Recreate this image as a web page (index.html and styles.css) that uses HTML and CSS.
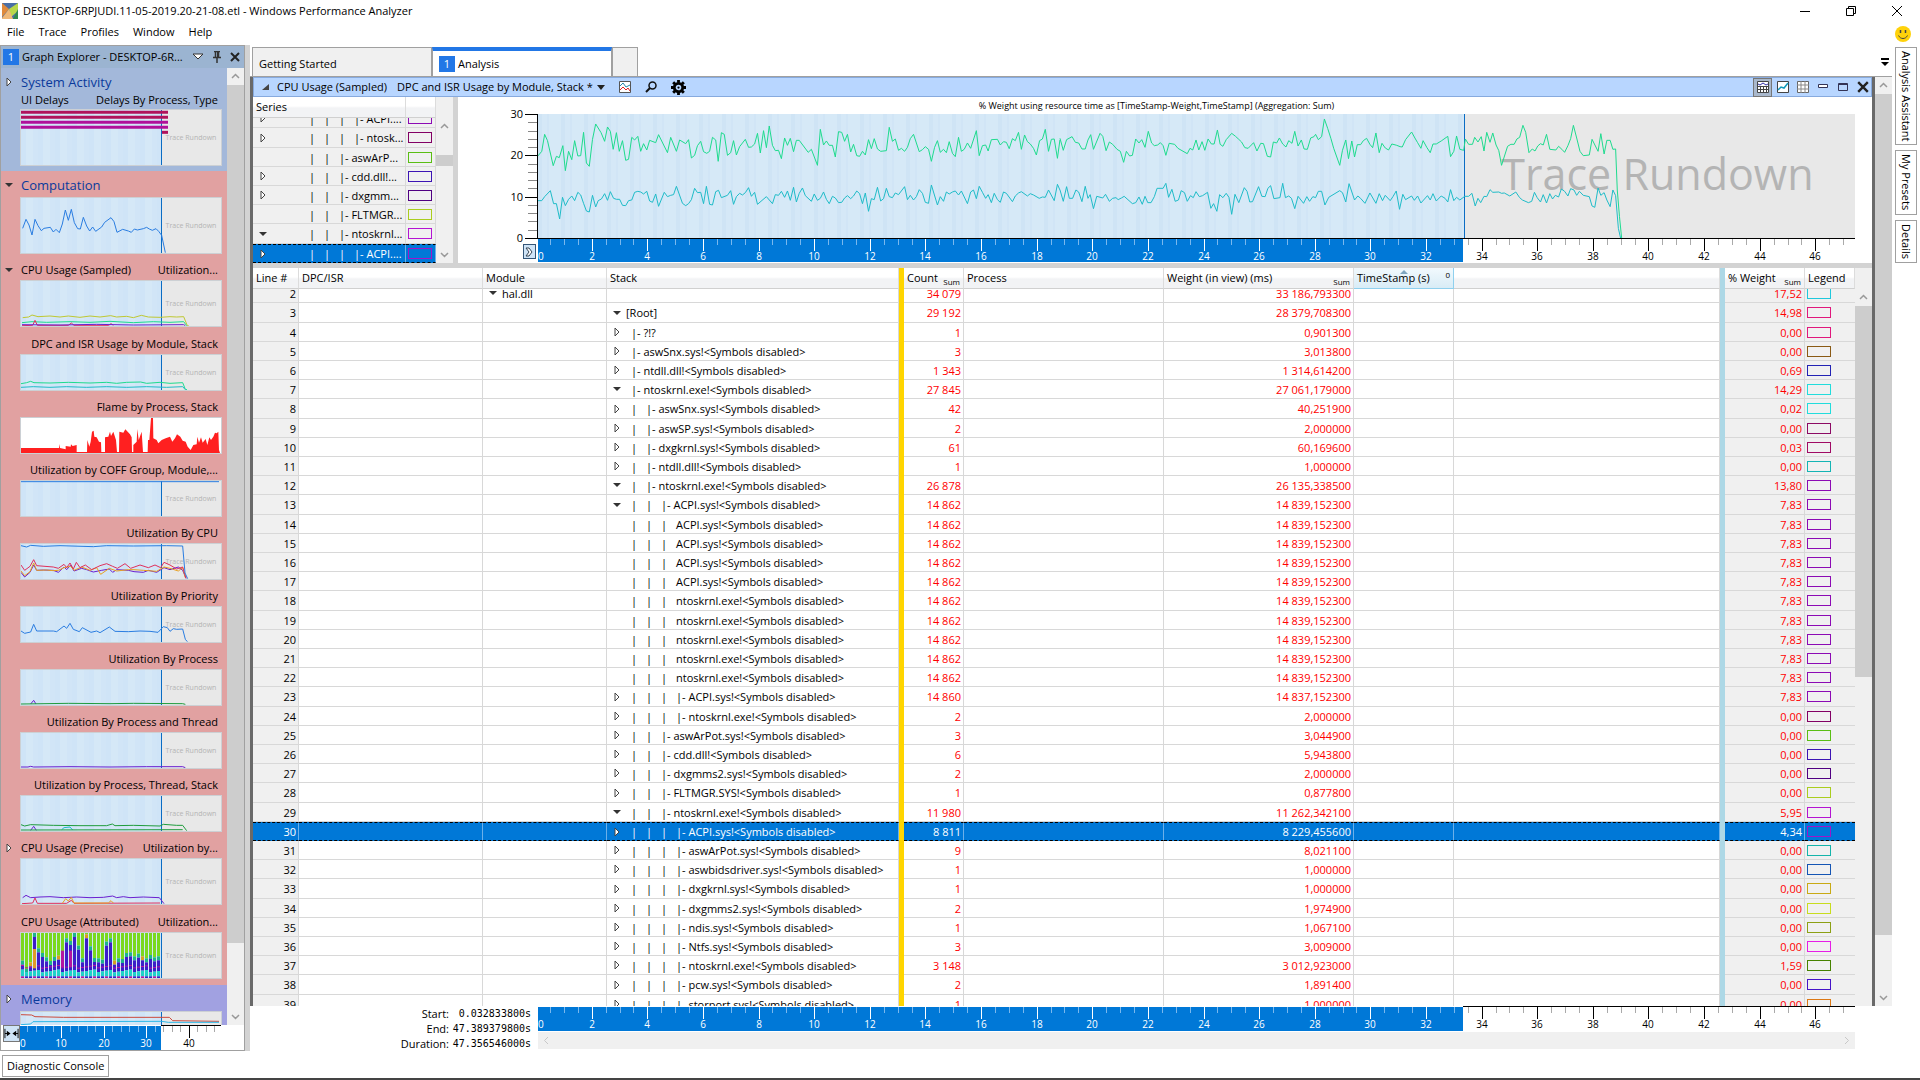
FILE: index.html
```html
<!DOCTYPE html>
<html lang="en">
<head>
<meta charset="UTF-8" />
<title>DESKTOP-6RPJUDI.11-05-2019.20-21-08.etl - Windows Performance Analyzer</title>
<link rel="stylesheet" href="styles.css">
</head>
<body>

<svg class="defs" aria-hidden="true">
  <symbol id="closed" viewBox="0 0 10 10"><path d="M3 1v8l4-4z" fill="#fff" stroke="#444" /></symbol>
  <symbol id="open" viewBox="0 0 10 10"><path d="M1 3h8L5 7z" fill="#333" /></symbol>
  <symbol id="up" viewBox="0 0 9 9"><path d="M1 6l3.500-3.500L8 6" fill="none" stroke="#999" stroke-width="1.500" /></symbol>
  <symbol id="down" viewBox="0 0 9 9"><path d="M1 3l3.500 3.500L8 3" fill="none" stroke="#999" stroke-width="1.500" /></symbol>
  <symbol id="cross" viewBox="0 0 10 10"><path d="M1 1l8 8M9 1L1 9" fill="none" stroke="#222" stroke-width="2" /></symbol>
</svg>

<header class="titlebar">
  <svg class="app-icon" viewBox="0 0 16 16">
    <path d="M0 0h16v16H0z" fill="#4a6fa5" /><path d="M0 0l7 6-7 8z" fill="#e08a3c" /><path d="M7 6l9-6v8l-7 6z" fill="#b9d84a" /><path d="M0 15l7-9 4 10H0z" fill="#f0b878" /><path d="M11 16l5-10v10z" fill="#2f8a4c" />
  </svg>
  <h1>DESKTOP-6RPJUDI.11-05-2019.20-21-08.etl - Windows Performance Analyzer</h1>
  <div class="window-buttons">
    <button aria-label="Minimize"><svg viewBox="0 0 10 10"><path d="M0 5.500h10" stroke="#000" /></svg></button>
    <button aria-label="Restore"><svg viewBox="0 0 10 10"><path d="M.5 2.500h7v7h-7zM2.500 2V.5h7v7H8" fill="none" stroke="#000" /></svg></button>
    <button aria-label="Close"><svg viewBox="0 0 10 10"><path d="M0 0l10 10M10 0L0 10" stroke="#000" /></svg></button>
  </div>
</header>

<nav class="menu">
  <button>File</button><button>Trace</button><button>Profiles</button><button>Window</button><button>Help</button>
</nav>

<div class="workspace">

  <aside class="explorer">
    <div class="explorer-head">
      <span class="badge">1</span>
      <h2>Graph Explorer - DESKTOP-6R...</h2>
      <button aria-label="Options"><svg width="12" height="8" viewBox="0 0 12 8"><path d="M1 1h10L6 6z" fill="#fff" stroke="#333" /></svg></button>
      <button aria-label="Pin"><svg width="10" height="12" viewBox="0 0 10 12"><path d="M2 .5h6M3.500 1v5M6.500 1v5M1 6.500h8M5 7v5" fill="none" stroke="#333" stroke-width="1.500" /><path d="M5 1h2v5H5z" fill="#333" /></svg></button>
      <button aria-label="Close"><svg width="10" height="10"><use href="#cross" /></svg></button>
    </div>
    <div class="explorer-body">
      <div class="graphs">
        <section class="group system">
          <div class="group-title"><svg class="arrow"><use href="#closed" /></svg><h3>System Activity</h3></div>
          <div class="label short"><span>UI Delays</span><span>Delays By Process, Type</span></div>
          <div class="thumb tall"><span class="rundown">Trace Rundown</span>
            <svg viewBox="63 330 600 165" preserveAspectRatio="none">
              <path d="M63 337h441M63 352h441" stroke="#b0125c" stroke-width="9" /><path d="M63 367h441M63 382h441" stroke="#b0109a" stroke-width="9" /><path d="M486 397h18" stroke="#b0125c" stroke-width="9" />
            </svg>
          </div>
        </section>

        <section class="group computation">
          <div class="group-title"><svg class="arrow"><use href="#open" /></svg><h3>Computation</h3></div>
          <div class="thumb tall"><span class="rundown">Trace Rundown</span>
            <svg class="lines" viewBox="63 594 600 165" preserveAspectRatio="none">
              <polyline class="blue" points="68,685 78,658 87,675 96,705 105,658 114,677 124,692 132,685 151,682 160,696 168,688 178,698 187,672 196,630 205,661 214,628 223,668 233,686 241,687 250,652 260,678 269,693 278,681 287,694 305,681 314,667 333,653 342,665 351,697 368,688 385,693 394,697 403,687 412,690 430,686 440,682 448,687 457,691 468,686 476,694 485,706 496,758" />
            </svg>
          </div>

          <div class="label"><svg class="arrow"><use href="#open" /></svg><span class="name">CPU Usage (Sampled)</span><span>Utilization...</span></div>
          <div class="thumb mid"><span class="rundown">Trace Rundown</span>
            <svg class="lines" viewBox="63 96 600 135" preserveAspectRatio="none">
              <polyline class="olive" points="68,206 86,204 96,198 114,203 150,201 180,204 205,201 240,205 270,201 300,204 332,200 350,204 380,202 400,206 424,199 445,204 480,205 510,203 530,204 551,203 562,230 566,230" />
              <polyline class="green" points="66,221 96,218 140,220 210,218 270,220 330,217 400,221 460,218 510,220 551,218 560,230" />
              <polyline class="red" points="66,230 98,229 105,214 112,229 205,229 214,222 222,229 326,229 333,224 340,229" />
              <polyline class="purple" points="66,227 180,228 290,226 400,228 551,227 556,230" />
            </svg>
          </div>

          <div class="label"><span>DPC and ISR Usage by Module, Stack</span></div>
          <div class="thumb"><span class="rundown">Trace Rundown</span>
            <svg class="lines" viewBox="63 315 600 105" preserveAspectRatio="none">
              <polyline class="green" points="63,401 80,398 92,394 102,398 150,399 205,397 270,399 320,397 350,400 380,397 422,396 440,400 480,397 510,400 548,398 556,418 561,419" />
              <polyline class="cyan" points="63,412 100,410 150,412 200,410 260,412 320,410 380,412 440,410 500,412 548,410 556,419" />
            </svg>
          </div>

          <div class="label"><span>Flame by Process, Stack</span></div>
          <div class="thumb flame">
            <svg viewBox="63 504 600 105" preserveAspectRatio="none">
              <polygon fill="#ff2020" points="63,609 63,594 177,594 177,582 180,594 197,598 197,588 212,590 213,583 218,588 230,585 230,606 261,606 262,570 268,590 272,575 276,545 281,542 283,560 290,562 297,575 303,577 304,606 315,606 315,562 325,560 330,545 333,558 340,545 348,570 351,606 357,606 358,545 370,548 376,538 383,545 390,553 395,562 396,606 400,606 400,585 410,575 412,537 416,570 425,545 429,606 443,606 444,570 448,570 453,504 459,504 460,565 470,570 475,580 485,570 497,565 510,560 517,575 525,565 531,553 541,560 548,572 557,575 563,590 572,600 580,585 590,583 592,560 597,578 603,562 608,578 617,567 622,585 628,562 633,570 640,560 645,548 650,550 655,545 657,600 660,609" />
            </svg>
          </div>

          <div class="label"><span>Utilization by COFF Group, Module,...</span></div>
          <div class="thumb"><span class="rundown">Trace Rundown</span>
            <svg class="lines" viewBox="63 693 600 105" preserveAspectRatio="none"><polyline class="blue" points="63,695 657,695" /></svg>
          </div>

          <div class="label"><span>Utilization By CPU</span></div>
          <div class="thumb"><span class="rundown">Trace Rundown</span>
            <svg class="lines" viewBox="63 13 600 105" preserveAspectRatio="none">
              <polyline class="purple" points="63,98 74,112 90,98 101,76 110,92 130,91 160,92 175,98 192,82 200,90 212,76 222,94 245,86 260,90 280,97 305,92 328,88 338,98 350,90 385,92 402,96 430,98 445,92 470,98 492,84 510,90 535,82 548,92 558,116" />
              <polyline class="amber" points="63,94 74,108 90,96 101,70 110,92 140,91 160,93 175,92 192,84 212,80 222,92 245,82 270,92 290,84 302,104 328,86 350,94 385,90 402,90 430,92 470,95 492,82 510,86 535,94 548,84 556,114" />
              <polyline class="red" points="63,76 74,92 90,80 101,60 110,78 160,82 175,86 192,74 200,84 210,70 220,88 229,68 240,84 256,76 275,90 300,78 320,72 338,80 352,86 375,72 392,86 420,76 445,84 465,76 482,84 492,68 510,76 530,88 548,82 558,116" />
              <polyline class="blue" points="63,18 80,22 92,17 130,20 180,18 280,21 320,18 400,19 500,18 548,19 555,100 563,117" />
            </svg>
          </div>

          <div class="label"><span>Utilization By Priority</span></div>
          <div class="thumb"><span class="rundown">Trace Rundown</span>
            <svg class="lines" viewBox="63 202 600 105" preserveAspectRatio="none"><polyline class="blue" points="63,274 74,281 92,277 101,254 110,274 160,274 170,276 192,259 200,266 210,251 220,269 238,276 247,264 273,278 290,274 300,279 328,262 345,275 385,276 420,274 450,275 474,278 490,261 502,264 510,275 520,267 530,269 548,268 556,299 562,306" /></svg>
          </div>

          <div class="label"><span>Utilization By Process</span></div>
          <div class="thumb"><span class="rundown">Trace Rundown</span>
            <svg class="lines" viewBox="63 391 600 105" preserveAspectRatio="none"><polyline class="purple" points="92,493 101,482 108,493" /><polyline class="leaf" points="63,493 205,491 330,492 400,491 548,492 556,494" /></svg>
          </div>

          <div class="label"><span>Utilization By Process and Thread</span></div>
          <div class="thumb"><span class="rundown">Trace Rundown</span>
            <svg class="lines" viewBox="63 580 600 105" preserveAspectRatio="none"><polyline class="purple" points="63,682 84,682 92,680 101,682 210,681 330,682 440,681 548,681 556,684" /></svg>
          </div>

          <div class="label"><span>Utilization by Process, Thread, Stack</span></div>
          <div class="thumb"><span class="rundown">Trace Rundown</span>
            <svg class="lines" viewBox="63 769 600 105" preserveAspectRatio="none">
              <polyline class="purple" points="92,872 101,860 109,872" /><polyline class="cyan" points="185,870 192,864 210,862 218,871" />
              <polyline class="leaf" points="63,855 74,859 92,855 160,857 240,858 320,858 337,853 345,858 400,857 480,859 490,854 530,857 548,857 560,873" /><polyline class="leaf" points="63,871 548,870" />
            </svg>
          </div>

          <div class="label"><svg class="arrow"><use href="#closed" /></svg><span class="name">CPU Usage (Precise)</span><span>Utilization by...</span></div>
          <div class="thumb mid"><span class="rundown">Trace Rundown</span>
            <svg class="lines" viewBox="63 120 600 135" preserveAspectRatio="none">
              <polyline class="purple" points="68,236 78,229 92,236 120,234 150,233 190,236 230,234 270,236 310,235 338,231 350,236 370,233 390,236 430,234 478,236 492,254" />
              <polyline class="red" points="66,254 98,252 105,237 112,253 200,253 214,244 222,253 480,252" /><polyline class="amber" points="187,253 197,239 205,246 214,235 222,252 325,252 333,245 340,252" />
            </svg>
          </div>

          <div class="label"><span class="name">CPU Usage (Attributed)</span><span>Utilization...</span></div>
          <div class="thumb mid"><span class="rundown">Trace Rundown</span>
            <svg id="attributed" viewBox="63 342 600 135" preserveAspectRatio="none"></svg>
          </div>
        </section>

        <section class="group memory">
          <div class="group-title"><svg class="arrow"><use href="#closed" /></svg><h3>Memory</h3></div>
          <div class="thumb tall"><svg class="lines" viewBox="63 576 600 165" preserveAspectRatio="none"><polyline class="brick" points="63,584 95,585 105,590 150,591 190,592 508,592 518,602 657,604" /><polyline class="sky" points="63,614 92,612 99,605 485,604 505,607 657,607" /></svg></div>
        </section>
      </div>
      <div class="scrollbar"><svg><use href="#up" /></svg><div class="track"><div class="thumb-bar explorer-bar"></div></div><svg><use href="#down" /></svg></div>
    </div>
    <div class="explorer-foot">
      <button class="fit" aria-label="Fit"><svg width="15" height="15" viewBox="0 0 16 16"><path d="M1 3v10M15 3v10M1 8h5M15 8h-5" stroke="#000" /><path d="M3 5l4 3-4 3zM13 5L9 8l4 3z" fill="#000" /></svg></button>
      <svg class="axis" data-major="10" data-minor="2" data-label="22"></svg>
    </div>
  </aside>

  <div class="splitter"></div>

  <main class="main">
    <div class="tabs">
      <button class="tab">Getting Started</button>
      <button class="tab active"><span class="badge">1</span>Analysis</button>
      <button class="tab empty" aria-label="New tab"></button>
      <button class="tab-list" aria-label="Tab list"><svg width="8" height="8" viewBox="0 0 8 8"><path d="M0 0h8v2H0zM0 4h8L4 8z" /></svg></button>
    </div>

    <div class="content">
      <div class="frame">
        <div class="graph-head">
          <svg width="8" height="8" viewBox="0 0 8 8"><path d="M8 1v6H1z" fill="#444" /></svg>
          <h2>CPU Usage (Sampled)</h2>
          <button class="preset">DPC and ISR Usage by Module, Stack *<svg width="8" height="5" viewBox="0 0 8 5"><path d="M0 0h8L4 5z" fill="#222" /></svg></button>
          <button aria-label="Chart"><svg width="12" height="12" viewBox="0 0 12 12"><path d="M.5.5h11v11H.5z" fill="#fff" stroke="#555" /><path d="M1 5l3-3 3 4 4-2" fill="none" stroke="#28a" /><path d="M1 9l3-3 3 3 2-2 2 3" fill="none" stroke="#d22" /></svg></button>
          <button aria-label="Search"><svg width="12" height="12" viewBox="0 0 12 12"><circle cx="7.500" cy="4.500" r="3.500" fill="none" stroke="#111" stroke-width="1.500" /><path d="M5 7l-4 4" stroke="#111" stroke-width="2" /></svg></button>
          <button aria-label="Settings"><svg width="15" height="15" viewBox="0 0 16 16"><circle cx="8" cy="8" r="4.500" fill="none" stroke="#000" stroke-width="3" /><path d="M8 0v3M8 13v3M0 8h3M13 8h3M2.300 2.300l2.200 2.200M11.500 11.500l2.200 2.200M13.700 2.300l-2.200 2.200M4.500 11.500l-2.200 2.200" stroke="#000" stroke-width="3" /><circle cx="8" cy="8" r="1.200" /></svg></button>
          <div class="views">
            <button class="on" aria-label="Graph and table"><svg viewBox="0 0 12 12"><path d="M.5.5h11v11H.5zM0 5.500h12M0 8.500h12M3.500 5v7M6.500 5v7M9.500 5v7" fill="#fff" stroke="#444" /><path d="M1 3l2 1 3-2 3 2 2-1" fill="none" stroke="#33a" /></svg></button>
            <button aria-label="Graph only"><svg viewBox="0 0 12 12"><path d="M.5.5h11v11H.5z" fill="#fff" stroke="#444" /><path d="M1 9l3-3 3 1 4-5" fill="none" stroke="#19b" stroke-width="1.500" /></svg></button>
            <button aria-label="Table only"><svg viewBox="0 0 12 12"><path d="M.5.5h11v11H.5z" fill="#fff" stroke="#666" /><path d="M0 4h12M0 8h12M4 0v12M8 0v12" stroke="#888" /></svg></button>
            <button aria-label="Minimize"><svg viewBox="0 0 12 12"><path d="M1.500 3.500h9v3h-9z" fill="#fff" stroke="#335" /></svg></button>
            <button aria-label="Maximize"><svg viewBox="0 0 12 12"><path d="M1.500 2.500h9v7h-9zM1 3.500h10" fill="none" stroke="#335" /></svg></button>
            <button aria-label="Close"><svg viewBox="0 0 10 10"><use href="#cross" /></svg></button>
          </div>
        </div>

        <div class="chart-row">
          <div class="series">
            <div class="scroll" id="series-scroll">
              <table class="grid series-grid">
                <colgroup><col><col class="c-swatch"></colgroup>
                <thead><tr><th>Series</th><th></th></tr></thead>
                <tbody id="series-rows"></tbody>
              </table>
            </div>
            <div class="scrollbar"><svg><use href="#up" /></svg><div class="track"><div class="thumb-bar series-bar"></div></div><svg><use href="#down" /></svg></div>
          </div>
          <div class="splitter"></div>
          <div class="chart">
            <p class="chart-title">% Weight using resource time as [TimeStamp-Weight,TimeStamp] (Aggregation: Sum)</p>
            <div class="plot-row">
              <svg class="y-axis" id="y-axis"></svg>
              <div class="plot">
                <span class="rundown">Trace Rundown</span>
                <svg class="lines" viewBox="0 0 1317 124" preserveAspectRatio="none">
                  <g transform="translate(-38 -24) scale(.3571 .3333)">
                    <polyline class="green" points="106,198 117,184 125,133 133,152 149,227 158,199 166,203 176,167 183,242 192,184 201,209 209,152 218,198 226,197 234,127 242,219 250,229 259,148 268,102 283,128 293,154 301,111 309,124 317,178 326,128 334,184 343,152 352,211 360,208 369,142 377,150 386,139 394,184 402,161 411,180 419,151 436,158 444,134 469,188 478,142 494,184 503,150 520,161 528,149 536,204 545,196 553,167 562,154 570,185 579,190 587,184 595,142 604,150 611,214 620,128 628,133 637,196 646,188 654,152 662,195 671,170 687,148 696,172 704,171 713,162 721,130 729,189 738,122 746,173 754,108 763,166 771,182 780,181 788,206 797,144 805,166 813,145 822,185 830,151 838,151 863,187 872,178 889,226 897,118 906,165 914,153 922,166 931,166 939,201 948,125 957,127 965,154 973,133 982,186 990,163 999,197 1007,199 1015,184 1023,195 1032,149 1040,176 1048,146 1057,177 1066,184 1082,182 1090,112 1099,154 1107,147 1116,181 1124,175 1133,184 1141,172 1149,146 1158,133 1174,185 1183,179 1191,170 1200,178 1208,214 1217,172 1225,152 1233,187 1242,178 1250,188 1258,155 1267,190 1275,200 1284,142 1292,184 1300,178 1309,159 1318,175 1334,122 1342,197 1351,167 1360,165 1367,183 1376,149 1393,148 1401,165 1410,155 1418,157 1426,176 1435,146 1443,152 1452,127 1460,178 1469,135 1477,155 1485,162 1494,175 1502,195 1511,152 1519,147 1527,118 1536,184 1544,148 1552,147 1561,205 1568,150" />
                    <polyline class="cyan" points="106,332 117,332 125,320 141,302 150,341 158,341 167,387 175,322 183,347 192,328 201,318 209,332 218,307 226,315 234,340 242,363 250,366 259,316 268,351 275,332 284,327 293,311 301,331 309,305 318,325 326,328 335,328 343,346 352,347 360,332 369,330 377,307 386,304 394,306 402,312 411,304 419,333 427,337 436,312 444,349 460,307 469,320 478,316 486,314 494,289 511,340 520,347 528,341 536,329 545,295 553,308 562,307 570,341 578,289 587,343 595,345 604,305 612,301 620,323 637,316 646,302 654,343 662,320 671,310 679,315 687,308 696,293 704,319 713,307 721,343 746,320 763,341 771,314 780,316 788,304 797,322 805,303 813,331 822,292 830,336 838,310 847,294 855,317 872,334 880,312 889,331 897,325 906,306 914,328 922,341 931,319 939,324 948,338 957,337 965,324 973,317 982,326 990,318 999,303 1007,311 1015,341 1023,309 1032,364 1040,326 1048,329 1057,292 1066,333 1074,326 1082,295 1090,320 1099,323 1107,309 1116,314 1133,290 1141,329 1149,316 1158,330 1166,320 1174,299 1183,310 1191,337 1200,340 1208,285 1225,345 1233,320 1242,334 1250,306 1258,312 1267,306 1275,303 1284,315 1292,303 1309,341 1318,306 1326,300 1334,326 1342,289 1351,307 1360,325 1367,314 1376,338 1384,310 1393,329 1401,337 1410,306 1418,310 1435,335 1443,318 1452,309 1460,305 1477,318 1485,311 1494,315 1510,325 1519,321 1527,322 1536,300 1552,332 1561,283 1568,300" />
                  </g>
                  <g transform="translate(522 -24) scale(.5485 .3333)">
                    <polyline class="green" points="0,145 6,181 12,149 22,140 28,157 34,159 40,177 46,177 51,150 56,134 61,178 73,130 78,139 84,182 90,156 96,163 104,178 110,184 116,217 121,184 127,198 132,196 138,147 144,159 149,149 155,172 161,124 167,159 172,167 178,165 183,158 188,167 193,196 199,160 209,163 215,175 232,191 237,175 242,180 248,150 253,180 259,155 264,181 270,147 276,162 281,162 287,120 292,163 297,169 303,149 313,130 320,139 326,148 331,156 337,173 343,175 353,158 359,183 366,160 371,161 378,199 384,201 389,156 395,159 400,144 406,162 412,171 417,152 423,160 428,124 434,168 440,150 445,177 451,178 457,144 463,140 466,133 471,149 477,140 482,87 488,115 494,146 499,175 510,226 515,181 521,150 526,206 532,153 537,201 542,164 548,164 553,152 559,145 565,163 570,173 576,129 582,188 587,160 593,174 599,180 605,162 614,166 620,170 624,171 630,149 641,126 647,144 652,158 658,175 662,152 669,173 675,188 680,162 686,162 695,153 707,139 712,200 718,184 723,138 729,178 736,181 739,147 745,163 752,163 756,142 762,156 768,140 773,183 778,127 784,157 789,129 795,165 800,182 805,226 816,169 822,163 828,163 833,147 838,142 844,106 849,127 855,188 861,177 866,183 871,168 876,161 881,165 887,133 893,178 904,180 909,169 915,178 920,187 926,167 931,146 936,106 942,144 948,184 954,197 965,195 970,148 981,184 986,131 992,192 997,151 1003,151 1008,178 1013,177 1016,300 1020,380 1024,445" />
                    <polyline class="cyan" points="0,300 6,334 12,290 17,325 23,325 29,300 34,306 40,335 46,289 51,325 55,314 61,356 67,319 78,324 83,313 90,334 96,325 102,323 106,329 112,324 117,319 132,341 138,338 144,321 150,343 155,319 160,338 166,338 172,320 177,295 188,295 193,280 198,322 204,298 210,334 216,330 221,302 227,308 232,334 238,317 243,323 248,305 254,320 260,317 269,307 275,355 280,341 286,364 291,314 297,323 303,310 308,322 313,373 319,313 326,338 336,293 341,304 346,336 351,335 362,290 368,319 374,320 379,295 384,287 390,326 401,323 406,280 411,323 417,318 422,325 428,356 434,319 444,340 450,320 455,334 461,320 466,323 471,304 477,304 483,345 490,322 510,302 515,308 521,336 527,281 537,330 543,318 548,325 556,340 565,309 576,340 582,311 588,332 593,316 602,332 607,320 613,303 619,358 625,313 630,329 641,318 646,331 652,318 658,339 670,317 675,330 680,311 686,333 695,318 702,325 707,336 712,299 718,332 723,322 729,330 738,319 745,319 751,310 757,348 762,325 767,338 773,319 778,320 784,299 789,307 800,306 805,310 810,309 820,318 831,306 838,323 843,330 854,338 860,334 865,307 870,323 876,336 881,314 887,339 893,311 898,327 903,316 909,321 914,297 920,304 926,318 931,296 937,300 942,316 947,304 954,316 965,320 970,348 975,352 981,294 986,316 992,308 997,330 1003,350 1008,300 1013,317 1018,415 1022,444" />
                  </g>
                </svg>
              </div>
            </div>
            <div class="axis-row">
              <button class="expand" aria-label="Expand"><svg width="10" height="12" viewBox="0 0 10 12"><path d="M2 2h3l3 4-3 4H2l3-4z" fill="#fff" stroke="#345" /></svg></button>
              <svg class="axis" data-major="2" data-minor="0.5" data-label="22" data-line="full"></svg>
            </div>
          </div>
        </div>

        <div class="h-splitter"></div>

        <div class="table-row">
          <div class="scroll" id="table-scroll">
            <table class="grid main-grid">
              <colgroup>
                <col class="c-line"><col class="c-dpc"><col class="c-module"><col class="c-stack"><col class="c-bar"><col class="c-count"><col class="c-process"><col class="c-weight"><col class="c-time"><col><col class="c-bar"><col class="c-percent"><col class="c-legend">
              </colgroup>
              <thead>
                <tr>
                  <th>Line #</th><th>DPC/ISR</th><th>Module</th><th>Stack</th><th class="gold"></th>
                  <th><div class="sum"><span>Count</span><small>Sum</small></div></th><th>Process</th>
                  <th><div class="sum"><span>Weight (in view) (ms)</span><small>Sum</small></div></th>
                  <th class="sorted"><div class="sum top"><span>TimeStamp (s)</span><svg class="sort-mark" viewBox="0 0 8 4"><path d="M0 4l4-4 4 4z" fill="#7fa6c0" /></svg><small>0</small></div></th>
                  <th></th><th class="ice"></th>
                  <th><div class="sum"><span>% Weight</span><small>Sum</small></div></th><th>Legend</th>
                </tr>
              </thead>
              <tbody id="rows"></tbody>
            </table>
          </div>
          <div class="scrollbar table-bar"><svg><use href="#up" /></svg><div class="track"><div class="thumb-bar main-bar"></div></div></div>
        </div>
      </div>
      <div class="scrollbar"><svg><use href="#up" /></svg><div class="track"><div class="thumb-bar outer-bar"></div></div><svg><use href="#down" /></svg></div>
    </div>

    <div class="timeline">
      <dl class="times">
        <dt>Start:</dt><dd>0.032833800s</dd>
        <dt>End:</dt><dd>47.389379800s</dd>
        <dt>Duration:</dt><dd>47.356546000s</dd>
      </dl>
      <div class="timeline-axis">
        <svg class="axis" data-major="2" data-minor="0.5" data-label="22"></svg>
        <div class="h-scroll"><svg viewBox="0 0 9 9"><path d="M6 1L2.500 4.500 6 8" /></svg><svg viewBox="0 0 9 9"><path d="M3 1l3.500 3.500L3 8" /></svg></div>
      </div>
    </div>
  </main>

  <aside class="side-tabs">
    <svg class="smiley" viewBox="0 0 16 16"><circle cx="8" cy="8" r="8" fill="#ffd20a" /><path d="M5.500 4v3M10.500 4v3" stroke="#444" stroke-width="1.500" /><path d="M3.500 9.500c2 4 7 4 9 0" fill="none" stroke="#444" /></svg>
    <button>Analysis Assistant</button>
    <button>My Presets</button>
    <button>Details</button>
  </aside>
</div>

<footer class="status"><button>Diagnostic Console</button></footer>
<div class="taskbar"></div>

<script src="script.js"></script>
</body>
</html>
```
FILE: styles.css
```css
* {
  box-sizing: border-box;
}
html, body {
  height: 100%;
}
body {
  margin: 0;
  display: flex;
  flex-direction: column;
  overflow: hidden;
  background: #fff;
  color: #000;
  font-family: "Open Sans", "Segoe UI", sans-serif;
  font-size: 11px;
  line-height: 16px;
}
h1, h2, h3, p, dl, dd {
  margin: 0;
  font-size: inherit;
  font-weight: normal;
}
button {
  margin: 0;
  padding: 0;
  border: 0;
  background: none;
  color: inherit;
  font: inherit;
}
svg {
  display: block;
  min-width: 0;
}
.defs {
  display: none;
}

/* title and menu */
.titlebar {
  display: flex;
  align-items: center;
  flex: 0 0 22px;
  padding-left: 2px;
  gap: 5px;
}
.titlebar h1 {
  flex: 1;
}
.app-icon {
  width: 16px;
  height: 16px;
}
.window-buttons {
  display: flex;
}
.window-buttons button {
  width: 46px;
  height: 20px;
  display: grid;
  place-items: center;
}
.window-buttons svg {
  width: 10px;
  height: 10px;
}
.menu {
  display: flex;
  flex: 0 0 23px;
  align-items: flex-start;
  padding: 2px 0 0 7px;
  gap: 14px;
}
.workspace {
  display: flex;
  flex: 1;
  min-height: 0;
}
.splitter {
  flex: 0 0 5px;
  background: #d3d3d3;
}
.h-splitter {
  flex: 0 0 5px;
  background: #d3d3d3;
}
.badge {
  display: grid;
  place-items: center;
  width: 16px;
  height: 16px;
  background: #2277e6;
  color: #fff;
}

/* scrollbars */
.scrollbar {
  flex: 0 0 17px;
  display: flex;
  flex-direction: column;
  background: #f0f0f0;
}
.scrollbar > svg {
  width: 9px;
  height: 17px;
  padding: 4px 0;
  margin: 0 auto;
}
.track {
  flex: 1;
}
.thumb-bar {
  background: #cdcdcd;
}
.explorer-bar {
  height: 93%;
}
.outer-bar {
  height: 94%;
}
.series-bar {
  height: 11px;
  margin-top: 20px;
}
.main-bar {
  height: 53%;
}

/* graph explorer */
.explorer {
  flex: 0 0 245px;
  min-width: 0;
  display: flex;
  flex-direction: column;
  border: 1px solid #a0a0a0;
}
.explorer-head {
  flex: 0 0 22px;
  display: flex;
  align-items: center;
  padding: 0 4px 0 2px;
  gap: 8px;
  background: #9bb4d1;
}
.explorer-head h2 {
  flex: 1;
  margin-left: -5px;
  white-space: nowrap;
}
.explorer-body {
  flex: 1;
  display: flex;
  min-height: 0;
}
.graphs {
  flex: 1;
  min-width: 0;
  overflow: hidden;
}
.group {
  padding: 0 5px 5px 19px;
}
.system {
  background: #a3b8da;
}
.computation {
  background: #e1a1a1;
}
.memory {
  background: #a1a1e1;
}
.group-title {
  display: flex;
  align-items: center;
  height: 26px;
  padding-top: 2px;
}
.group-title h3 {
  color: #0a3a9c;
  font-size: 13px;
  line-height: 22px;
}
.arrow {
  flex: 0 0 10px;
  height: 10px;
  margin-left: -16px;
  margin-right: 7px;
}
.label {
  display: flex;
  align-items: center;
  justify-content: flex-end;
  height: 26px;
  padding: 5px 4px 0 0;
  white-space: nowrap;
}
.label.short {
  height: 15px;
  padding: 0 4px 4px 1px;
  justify-content: space-between;
}
.label .name {
  margin-right: auto;
}
.label .name:first-child {
  margin-left: 1px;
}
.thumb {
  position: relative;
  height: 37px;
  border: 1px solid #ccd0d4;
  background: linear-gradient(to right, transparent 70%, #0a6cc4 70%, #0a6cc4 calc(70% + 1px), #e8e8e8 calc(70% + 1px)), repeating-linear-gradient(to right, #cfe4f7 0 5px, #d5e8f7 5px 12px, #d1e5f7 12px 17px);
}
.thumb.mid {
  height: 47px;
  margin-bottom: 1px;
}
.thumb.tall {
  height: 57px;
}
.thumb.flame {
  background: #fff;
}
.thumb svg {
  position: relative;
  width: 100%;
  height: 100%;
}
.rundown {
  position: absolute;
  inset: 0 0 0 70%;
  display: grid;
  place-items: center;
  color: #b4b4b4;
  font-size: 7px;
  white-space: nowrap;
}
.explorer-foot {
  flex: 0 0 25px;
  display: flex;
  background: #fff;
}
.explorer-foot .axis {
  flex: 1;
  height: 25px;
  margin-right: 23px;
}
.fit {
  flex: 0 0 17px;
  height: 17px;
  margin: 0 0 0 2px;
  border: 1px solid #777;
  background: #cfe4f7;
}

/* plot lines */
.lines polyline {
  fill: none;
  stroke-width: 1;
  vector-effect: non-scaling-stroke;
}
.blue { stroke: #2a7de1; }
.green { stroke: #1edb8e; }
.cyan { stroke: #1fbcc8; }
.olive { stroke: #bfc832; }
.leaf { stroke: #1f9c3c; }
.red { stroke: #e0305c; }
.purple { stroke: #6a1fd0; }
.amber { stroke: #e8a020; }
.brick { stroke: #cc4a3c; }
.sky { stroke: #2cb8e8; }

/* document tabs */
.main {
  flex: 1;
  min-width: 0;
  display: flex;
  flex-direction: column;
}
.tabs {
  flex: 0 0 32px;
  display: flex;
  padding: 2px 0 0 2px;
  border-bottom: 1px solid #a0a0a0;
}
.tab {
  display: flex;
  align-items: center;
  gap: 3px;
  width: 180px;
  padding: 4px 0 0 6px;
  border: 1px solid #a0a0a0;
  border-bottom: 0;
  background: #f0f0f0;
}
.tab.active {
  padding-top: 0;
  border-top: 4px solid #2277e6;
  background: #fff;
}
.tab.empty {
  width: 26px;
}
.tab-list {
  margin: auto 3px auto auto;
}

/* analysis frame */
.content {
  flex: 1;
  display: flex;
  min-height: 0;
}
.frame {
  flex: 1;
  min-width: 0;
  display: flex;
  flex-direction: column;
  border: solid #696969;
  border-width: 0 3px;
}
.graph-head {
  flex: 0 0 20px;
  display: flex;
  align-items: center;
  gap: 14px;
  padding: 0 0 0 7px;
  border: 1px solid #87aade;
  background: #b8d6ff;
}
.graph-head h2 {
  margin-left: -6px;
}
.preset {
  display: flex;
  align-items: center;
  gap: 4px;
  margin-left: -4px;
}
.views {
  display: flex;
  margin-left: auto;
  gap: 3px;
}
.views button {
  width: 17px;
  height: 17px;
  display: grid;
  place-items: center;
}
.views .on {
  background: #a9b8cc;
  outline: 1px solid #777;
}
.views svg {
  width: 12px;
  height: 12px;
}
.chart-row {
  flex: 0 0 166px;
  min-height: 0;
  display: flex;
}
.series {
  flex: 0 0 200px;
  display: flex;
  min-height: 0;
}
.series .scrollbar {
  padding-top: 21px;
}
.scroll {
  flex: 1;
  min-width: 0;
  overflow: hidden;
}
.chart {
  flex: 1;
  min-width: 0;
  display: flex;
  flex-direction: column;
  padding-right: 17px;
}
.chart-title {
  height: 17px;
  padding-left: 0;
  font-size: 9px;
  line-height: 17px;
  text-align: center;
}
.plot-row {
  display: flex;
  height: 124px;
}
.y-axis {
  flex: 0 0 80px;
  width: 80px;
  height: 130px;
  overflow: visible;
}
.plot {
  position: relative;
  flex: 1;
  min-width: 0;
  background: linear-gradient(to right, transparent 70.300%, #0a6cc4 70.300%, #0a6cc4 calc(70.300% + 1px), #e8e8e8 calc(70.300% + 1px)), repeating-linear-gradient(to right, #cfe4f5 0 4px, #d5e8f7 4px 9px, #d1e5f6 9px 11px, #d6e9f7 11px 23px);
}
.plot .rundown {
  padding-bottom: 4px;
  font-size: 43px;
}
.plot svg {
  position: relative;
  width: 100%;
  height: 100%;
}
.axis-row {
  display: flex;
  height: 25px;
}
.expand {
  flex: 0 0 11px;
  height: 13px;
  margin: 7px 3px 0 66px;
  outline: 1px solid #357;
  background: #cfe4f7;
}
.axis {
  flex: 1;
  min-width: 0;
  height: 24px;
  font-size: 10px;
}
#y-axis {
  font-size: 11px;
}

/* grids */
.grid {
  width: 100%;
  table-layout: fixed;
  border-collapse: separate;
  border-spacing: 0;
}
.grid th {
  position: sticky;
  top: 0;
  z-index: 1;
  height: 21px;
  padding: 0 3px;
  overflow: hidden;
  border-right: 1px solid #dcdcdc;
  border-bottom: 1px solid #d0d0d0;
  background: linear-gradient(#fff 45%, #f2f3f5 55%);
  font-weight: normal;
  text-align: left;
  white-space: nowrap;
}
.grid td {
  height: 19px;
  padding: 0 2px;
  overflow: hidden;
  border-right: 1px solid #d8d8d8;
  border-bottom: 1px solid #d8d8d8;
  line-height: 17px;
  white-space: nowrap;
}
.grid tr:nth-child(5n+2) td {
  height: 20px;
}
.grid .sorted {
  border-color: #8fd0ee;
  background: linear-gradient(#f2f9fd, #d8ecf6);
}
.grid .gold {
  padding: 0;
  border: 0;
  background: #ffd500;
}
.grid .ice {
  padding: 0;
  border: 0;
  background: #add8e6;
}
.sum {
  display: flex;
  justify-content: space-between;
}
.sum small {
  align-self: flex-end;
  font-size: 8px;
  line-height: 9px;
}
.sum.top small {
  align-self: flex-start;
}
.sort-mark {
  width: 8px;
  height: 4px;
  margin: 0 auto 0 -30px;
}
.grid .num {
  color: #f00;
  text-align: right;
}
.grid .line {
  background: #f0f0f0;
  text-align: right;
}
.grid .side, .series-grid td {
  background: #f0f0f0;
}
.main-grid .last {
  border-right: 0;
}
.c-line { width: 46px; }
.c-dpc { width: 184px; }
.c-module { width: 124px; }
.c-stack { width: 292px; }
.c-bar { width: 5px; }
.c-count { width: 60px; }
.c-process { width: 200px; }
.c-weight { width: 190px; }
.c-time { width: 100px; }
.c-percent { width: 80px; }
.c-legend { width: 50px; }
.c-swatch { width: 30px; }
.grid .selected td {
  border-top: 1px dashed #000;
  border-bottom: 1px dashed #000;
  border-right-color: #6cb0ea;
  background: #0078d7;
  color: #fff;
  line-height: 16px;
}
.grid .selected .gold {
  border: 0;
  background: #ffd500;
}
.grid .selected .ice {
  border: 0;
  background: #add8e6;
}
.tree {
  display: flex;
  align-items: center;
}
.tree button {
  flex: 0 0 10px;
  height: 10px;
  margin: 0 4px 0 3px;
}
.tree .none {
  visibility: hidden;
}
.tree button svg {
  width: 10px;
  height: 10px;
}
.guide {
  flex: 0 0 15px;
  padding-left: 5px;
}
.branch {
  padding-left: 5px;
}
.series-grid .tree button {
  margin-right: 36px;
}
.swatch {
  width: 24px;
  height: 11px;
  border: 1px solid;
}
.table-row {
  flex: 1;
  display: flex;
  min-height: 0;
}
.table-bar {
  padding-top: 21px;
}

/* bottom timeline */
.timeline {
  flex: 0 0 44px;
  display: flex;
  padding-right: 37px;
}
.times {
  flex: 0 0 288px;
  display: grid;
  grid-template-columns: 1fr 80px;
  column-gap: 2px;
  padding-right: 7px;
  line-height: 15px;
  text-align: right;
}
.times dd {
  font: 10px/15px "DejaVu Sans Mono", monospace;
}
.timeline-axis {
  flex: 1;
  min-width: 0;
}
.timeline-axis .axis {
  width: 100%;
  height: 25px;
}
.h-scroll {
  display: flex;
  justify-content: space-between;
  align-items: center;
  height: 17px;
  margin-top: 1px;
  padding: 0 4px;
  background: #f0f0f0;
}
.h-scroll svg {
  width: 9px;
  height: 9px;
  fill: none;
  stroke: #c8c8c8;
}

/* right edge */
.side-tabs {
  flex: 0 0 28px;
  display: flex;
  flex-direction: column;
  align-items: flex-start;
  gap: 5px;
  padding-left: 3px;
}
.smiley {
  width: 16px;
  height: 16px;
  margin-top: -19px;
}
.side-tabs button {
  width: 22px;
  padding: 3px 0;
  border: 1px solid #a0a0a0;
  line-height: 20px;
  writing-mode: vertical-rl;
}

.status {
  flex: 0 0 27px;
  padding: 4px 2px 0;
}
.status button {
  height: 22px;
  padding: 0 4px;
  border: 1px solid #a0a0a0;
}
.taskbar {
  flex: 0 0 2px;
  background: #444;
}
```
FILE: script.js
```js
const SVG_NS = 'http://www.w3.org/2000/svg';

// line, depth, state (o = open, c = closed, - = leaf), name, count, weight, percent, colour
const S = '!<Symbols disabled>';
const rows = [
  [3, -1, 'o', '[Root]', '29 192', '28 379,708300', '14,98', '#e0187c'],
  [4, 0, 'c', '?!?', '1', '0,901300', '0,00', '#e0187c'],
  [5, 0, 'c', 'aswSnx.sys' + S, '3', '3,013800', '0,00', '#8a5a14'],
  [6, 0, 'c', 'ntdll.dll' + S, '1 343', '1 314,614200', '0,69', '#2222b4'],
  [7, 0, 'o', 'ntoskrnl.exe' + S, '27 845', '27 061,179000', '14,29', '#22dcdc'],
  [8, 1, 'c', 'aswSnx.sys' + S, '42', '40,251900', '0,02', '#22dcdc'],
  [9, 1, 'c', 'aswSP.sys' + S, '2', '2,000000', '0,00', '#8c0a64'],
  [10, 1, 'c', 'dxgkrnl.sys' + S, '61', '60,169600', '0,03', '#a00a64'],
  [11, 1, 'c', 'ntdll.dll' + S, '1', '1,000000', '0,00', '#14b4b4'],
  [12, 1, 'o', 'ntoskrnl.exe' + S, '26 878', '26 135,338500', '13,80', '#8c0ab4'],
  [13, 2, 'o', 'ACPI.sys' + S, '14 862', '14 839,152300', '7,83', '#8c0ab4']
];
for (let n = 14; n <= 22; n++) {
  rows.push([n, 3, '-', (n < 18 ? 'ACPI.sys' : 'ntoskrnl.exe') + S, '14 862', '14 839,152300', '7,83', '#8c0ab4']);
}
rows.push(
  [23, 3, 'c', 'ACPI.sys' + S, '14 860', '14 837,152300', '7,83', '#8c0ab4'],
  [24, 3, 'c', 'ntoskrnl.exe' + S, '2', '2,000000', '0,00', '#820064'],
  [25, 2, 'c', 'aswArPot.sys' + S, '3', '3,044900', '0,00', '#5abe14'],
  [26, 2, 'c', 'cdd.dll' + S, '6', '5,943800', '0,00', '#3c14b4'],
  [27, 2, 'c', 'dxgmms2.sys' + S, '2', '2,000000', '0,00', '#500082'],
  [28, 2, 'c', 'FLTMGR.SYS' + S, '1', '0,877800', '0,00', '#aacd1e'],
  [29, 2, 'o', 'ntoskrnl.exe' + S, '11 980', '11 262,342100', '5,95', '#b414d2'],
  [30, 3, 'c', 'ACPI.sys' + S, '8 811', '8 229,455600', '4,34', '#a014c8'],
  [31, 3, 'c', 'aswArPot.sys' + S, '9', '8,021100', '0,00', '#14b4aa'],
  [32, 3, 'c', 'aswbidsdriver.sys' + S, '1', '1,000000', '0,00', '#1455b4'],
  [33, 3, 'c', 'dxgkrnl.sys' + S, '1', '1,000000', '0,00', '#c8aa14'],
  [34, 3, 'c', 'dxgmms2.sys' + S, '2', '1,974900', '0,00', '#c8dc1e'],
  [35, 3, 'c', 'ndis.sys' + S, '1', '1,067100', '0,00', '#8ca014'],
  [36, 3, 'c', 'Ntfs.sys' + S, '3', '3,009000', '0,00', '#e61ee6'],
  [37, 3, 'c', 'ntoskrnl.exe' + S, '3 148', '3 012,923000', '1,59', '#468200'],
  [38, 3, 'c', 'pcw.sys' + S, '2', '1,891400', '0,00', '#4614c8'],
  [39, 3, 'c', 'storport.sys' + S, '1', '1,000000', '0,00', '#dc7814']
);

const series = [
  [3, 'c', 'ACPI....', '#8c0ab4'],
  [3, 'c', 'ntosk...', '#820064'],
  [2, '-', 'aswArP...', '#5abe14'],
  [2, 'c', 'cdd.dll!...', '#3c14b4'],
  [2, 'c', 'dxgmm...', '#500082'],
  [2, '-', 'FLTMGR...', '#aacd1e'],
  [2, 'o', 'ntoskrnl...', '#b414d2'],
  [3, 'c', 'ACPI....', '#a014c8']
];

function escapeText(text) {
  return text.replace(/</g, '&lt;').replace(/>/g, '&gt;');
}

function tree(depth, state, name, branch = true) {
  const icon = state === 'o' ? 'open' : 'closed';
  const guides = '<span class="guide">|</span>'.repeat(Math.max(depth, 0));
  const lead = depth < 0 ? '<span>' : branch ? '<span class="branch">|- ' : '<span class="branch">';
  return `<div class="tree"><button class="${state === '-' ? 'none' : ''}" aria-label="Toggle"><svg><use href="#${icon}" /></svg></button>${guides}${lead}${escapeText(name)}</span></div>`;
}

function rowHtml([line, depth, state, name, count, weight, percent, colour], module = '') {
  const stack = name ? tree(depth, state, name, state !== '-') : '';
  return `<tr class="${line === 30 ? 'selected' : ''}"><td class="line">${line}</td><td></td><td>${module}</td><td>${stack}</td><td class="gold"></td>` +
    `<td class="num">${count}</td><td></td><td class="num">${weight}</td><td></td><td></td><td class="ice"></td>` +
    `<td class="num side">${percent}</td><td class="side last"><div class="swatch" style="border-color:${colour}"></div></td></tr>`;
}

document.getElementById('rows').innerHTML =
  rowHtml([2, 0, '-', '', '34 079', '33 186,793300', '17,52', '#1fc8dc'], tree(-1, 'o', 'hal.dll')) +
  rows.map(r => rowHtml(r)).join('');

document.getElementById('series-rows').innerHTML = series.map(([depth, state, name, colour], i) =>
  `<tr class="${i === 7 ? 'selected' : ''}"><td>${tree(depth, state, name)}</td><td><div class="swatch" style="border-color:${colour}"></div></td></tr>`
).join('');

document.getElementById('table-scroll').scrollTop = 5;
document.getElementById('series-scroll').scrollTop = 9;

function add(parent, tag, attrs, text) {
  const el = document.createElementNS(SVG_NS, tag);
  for (const key in attrs) el.setAttribute(key, attrs[key]);
  if (text !== undefined) el.textContent = text;
  parent.appendChild(el);
}

// Time axes, the selected part is filled blue
const START = 0.0328;
const END = 47.3894;
const SELECTED = 0.7025;

function drawAxis(svg) {
  const width = svg.clientWidth;
  const height = svg.clientHeight;
  const major = Number(svg.dataset.major);
  const minor = Number(svg.dataset.minor);
  const split = Math.round(width * SELECTED);
  svg.innerHTML = '';
  add(svg, 'rect', { x: 0, y: 1, width: split, height: height - 1, fill: '#0078d7' });
  const lineStart = svg.dataset.line ? 0 : split;
  add(svg, 'rect', { x: lineStart, y: 0, width: width - lineStart, height: 1, fill: '#000' });

  for (let i = 0; i * minor < END; i++) {
    const t = i * minor;
    const x = Math.round((t - START) / (END - START) * width) - 1;
    const isMajor = t % major === 0;
    const selected = x < split;
    if (t > 0) {
      add(svg, 'rect', {
        x, y: 1, width: 1, height: isMajor ? 12 : 6,
        fill: selected ? (isMajor ? '#fff' : '#7ab8ee') : (isMajor ? '#000' : '#aaa')
      });
    }
    if (isMajor) {
      add(svg, 'text', {
        x: t ? x : 0, y: svg.dataset.label, 'text-anchor': t ? 'middle' : 'start',
        fill: selected ? '#fff' : '#000'
      }, t);
    }
  }
}

function drawYAxis() {
  const svg = document.getElementById('y-axis');
  add(svg, 'rect', { x: 79, y: 0, width: 1, height: 125, fill: '#000' });
  for (let v = 0; v <= 30; v += 2) {
    add(svg, 'rect', { x: 70, y: Math.round(124 - v * 124 / 30), width: 9, height: 1, fill: '#888' });
  }
  for (let v = 0; v <= 30; v += 10) {
    const y = Math.round(124 - v * 124 / 30);
    add(svg, 'rect', { x: 67, y, width: 12, height: 1, fill: '#000' });
    add(svg, 'text', { x: 65, y: y + 4, 'text-anchor': 'end' }, v);
  }
}

// Stacked bars: y where the green part of each bar ends
function drawAttributed() {
  const svg = document.getElementById('attributed');
  const tops = [425, 450, 430, 342, 388, 402, 415, 426, 414, 410, 418, 358, 366, 342, 380, 418, 346, 382, 417, 418, 422, 368, 358, 425, 418, 420, 402, 400, 412, 404, 412, 418, 408, 415, 412];
  tops.forEach((top, i) => {
    const x = 63 + i * 12;
    const part = (y, end, fill) => add(svg, 'rect', { x, y, width: 9, height: Math.max(end - y, 0), fill });
    const base = 452 + (i * 7) % 9;
    part(342, top, '#7ad81e');
    part(top, top + 12, i % 7 === 2 ? '#d8a01e' : '#1eb48c');
    part(top + 12, base, '#3c1ec8');
    part(base - 14, base - 11, '#b414a0');
    part(base, 472, '#1ed2c8');
    part(472, 477, i % 3 ? '#3c1ec8' : '#b414a0');
    if (i === 3) part(390, 448, '#e09a28');
    if (i === 10 || i === 12) part(395, 445, '#b414a0');
  });
}

function drawAxes() {
  document.querySelectorAll('.axis').forEach(drawAxis);
}

drawAxes();
drawYAxis();
drawAttributed();
window.addEventListener('resize', drawAxes);
```
